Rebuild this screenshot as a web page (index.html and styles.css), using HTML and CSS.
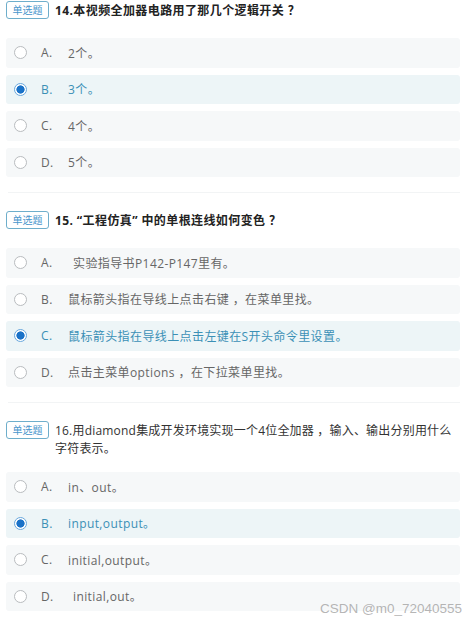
FILE: index.html
```html
<!DOCTYPE html>
<html lang="zh">
<head>
<meta charset="utf-8">
<title>单选题</title>
<link rel="stylesheet" href="styles.css">
</head>
<body>
<div class="page">
  <section class="question">
    <div class="q-head">
      <span class="badge">单选题</span>
      <div class="q-title bold">14.本视频全加器电路用了那几个逻辑开关 ？</div>
    </div>
    <div class="options">
      <div class="opt"><span class="radio"></span><span class="letter">A.</span><span class="text">2个。</span></div>
      <div class="opt selected"><span class="radio"></span><span class="letter">B.</span><span class="text">3个。</span></div>
      <div class="opt"><span class="radio"></span><span class="letter">C.</span><span class="text">4个。</span></div>
      <div class="opt"><span class="radio"></span><span class="letter">D.</span><span class="text">5个。</span></div>
    </div>
  </section>
  <div class="divider"></div>
  <section class="question">
    <div class="q-head">
      <span class="badge">单选题</span>
      <div class="q-title bold">15. “工程仿真” 中的单根连线如何变色 ？</div>
    </div>
    <div class="options">
      <div class="opt"><span class="radio"></span><span class="letter">A.</span><span class="text indent">实验指导书P142-P147里有。</span></div>
      <div class="opt"><span class="radio"></span><span class="letter">B.</span><span class="text">鼠标箭头指在导线上点击右键 ，在菜单里找。</span></div>
      <div class="opt selected"><span class="radio"></span><span class="letter">C.</span><span class="text">鼠标箭头指在导线上点击左键在S开头命令里设置。</span></div>
      <div class="opt"><span class="radio"></span><span class="letter">D.</span><span class="text">点击主菜单options ，在下拉菜单里找。</span></div>
    </div>
  </section>
  <div class="divider"></div>
  <section class="question">
    <div class="q-head">
      <span class="badge">单选题</span>
      <div class="q-title">16.用diamond集成开发环境实现一个4位全加器 ，输入、输出分别用什么字符表示。</div>
    </div>
    <div class="options tight">
      <div class="opt"><span class="radio"></span><span class="letter">A.</span><span class="text">in、out。</span></div>
      <div class="opt selected"><span class="radio"></span><span class="letter">B.</span><span class="text">input,output。</span></div>
      <div class="opt"><span class="radio"></span><span class="letter">C.</span><span class="text">initial,output。</span></div>
      <div class="opt"><span class="radio"></span><span class="letter">D.</span><span class="text indent">initial,out。</span></div>
    </div>
  </section>
  <div class="watermark">CSDN @m0_72040555</div>
</div>
</body>
</html>
```

FILE: styles.css
```css
html, body {
  margin: 0;
  padding: 0;
  background: #ffffff;
}

body {
  font-family: "Open Sans", "Noto Sans CJK SC", sans-serif;
  font-size: 12px;
  color: #333;
}

.page {
  position: relative;
  width: 454px;
  padding: 1px 14px 0 6px;
  height: 622px;
}

.q-head {
  display: flex;
  align-items: flex-start;
  gap: 6px;
}

.badge {
  flex: none;
  box-sizing: border-box;
  width: 43px;
  height: 18px;
  border: 1px solid #6eaecb;
  border-radius: 3px;
  color: #4a96cc;
  font-size: 10px;
  line-height: 16px;
  text-align: center;
  font-family: "Noto Sans CJK SC", sans-serif;
}

.q-title {
  padding-top: 1px;
  line-height: 18px;
  color: #333;
  letter-spacing: 0.2px;
  font-size: 12px;
}

.q-title.bold {
  font-weight: bold;
  color: #222;
  letter-spacing: 0.4px;
}

.options {
  margin-top: 18px;
  display: flex;
  flex-direction: column;
  gap: 7px;
}

.options.tight {
  margin-top: 14px;
}

.opt {
  height: 29.5px;
  display: flex;
  align-items: center;
  padding-left: 8px;
  background: #f6f8f9;
  border-radius: 3px;
  color: #666;
  letter-spacing: 0.4px;
}

.opt.selected {
  background: #edf5f7;
  color: #3b90b6;
}

.radio {
  flex: none;
  box-sizing: border-box;
  width: 13px;
  height: 13px;
  border-radius: 50%;
  border: 1px solid #b9bcbf;
  background: #fff;
}

.opt.selected .radio {
  border: 1px solid #6aa8dd;
  background: radial-gradient(circle, #1a72c8 0 3.8px, #ffffff 4.4px);
}

.letter {
  margin-left: 14px;
  width: 27px;
  flex: none;
}

.text.indent {
  padding-left: 5px;
}

.divider {
  height: 1px;
  background: #f2f4f5;
  margin: 15px 0 18px 2px;
}

.watermark {
  position: absolute;
  right: 12px;
  top: 601px;
  font-family: "Liberation Sans", Arial, sans-serif;
  font-size: 13.5px;
  color: rgba(150, 150, 150, 0.7);
}
```
